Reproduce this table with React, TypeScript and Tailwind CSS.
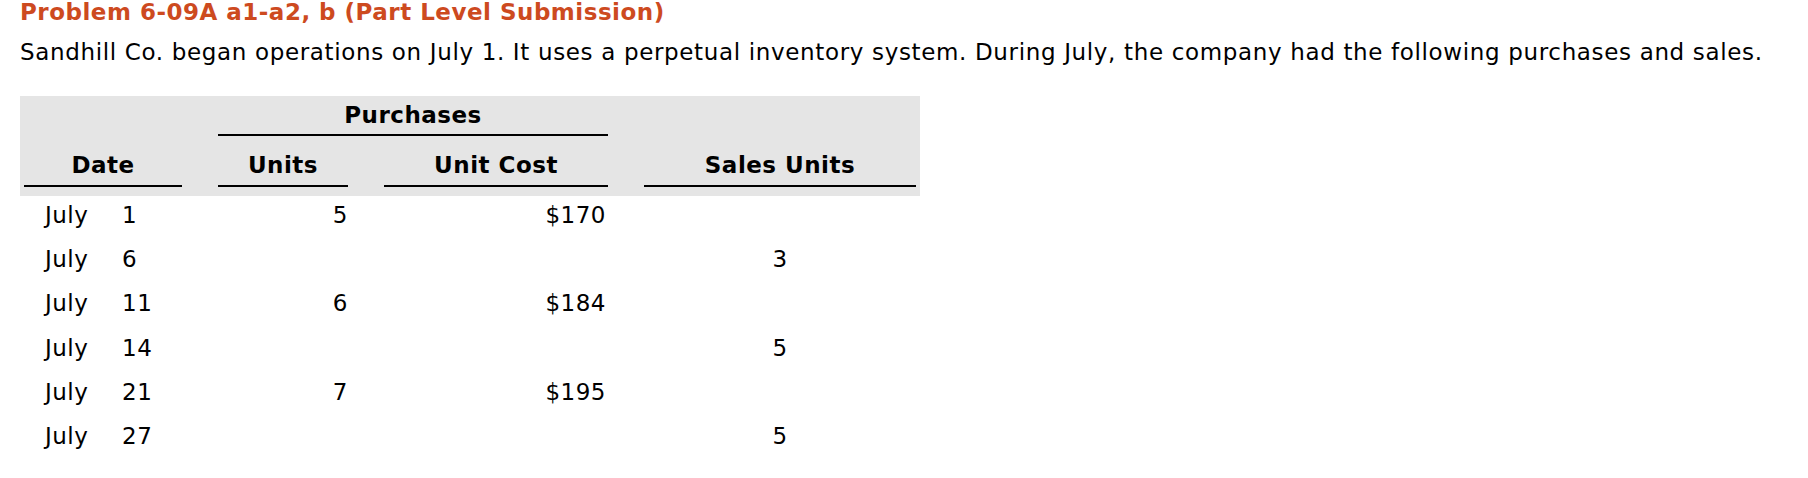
const rows = [
  { day: "1", units: "5", cost: "$170", sales: "" },
  { day: "6", units: "", cost: "", sales: "3" },
  { day: "11", units: "6", cost: "$184", sales: "" },
  { day: "14", units: "", cost: "", sales: "5" },
  { day: "21", units: "7", cost: "$195", sales: "" },
  { day: "27", units: "", cost: "", sales: "5" },
];

const cols = "grid grid-cols-[158px_36px_130px_36px_224px_36px_272px]";

export default function App() {
  return (
    <div className="min-h-screen bg-white pl-5 font-['DejaVu_Sans',Verdana,sans-serif] text-[23px] leading-[26px] tracking-[0.5px] text-black">
      <h1 className="-mt-px font-bold text-[#cd4a1f]">Problem 6-09A a1-a2, b (Part Level Submission)</h1>
      <p className="mt-[14px] tracking-[0.65px]">
        Sandhill Co. began operations on July 1. It uses a perpetual inventory system. During July, the company had the
        following purchases and sales.
      </p>

      <div className="mt-[31px] w-[900px]">
        <div className={`${cols} bg-[#e5e5e5] px-1 pt-[6px] pb-[9px] font-bold`}>
          <div className="col-span-3 col-start-3 border-b-2 border-black pb-[6px] text-center">Purchases</div>
          <div className="col-start-1 row-start-2 mt-4 border-b-2 border-black pb-[7px] text-center">Date</div>
          <div className="col-start-3 row-start-2 mt-4 border-b-2 border-black pb-[7px] text-center">Units</div>
          <div className="col-start-5 row-start-2 mt-4 border-b-2 border-black pb-[7px] text-center">Unit Cost</div>
          <div className="col-start-7 row-start-2 mt-4 border-b-2 border-black pb-[7px] text-center">Sales Units</div>
        </div>

        <div className="-mt-[3px] px-1">
          {rows.map((row) => (
            <div key={row.day} className={`${cols} leading-[44.2px]`}>
              <div className="pl-[21px]">
                <span className="inline-block w-[77px]">July</span>
                {row.day}
              </div>
              <div />
              <div className="text-right">{row.units}</div>
              <div />
              <div className="pr-[2px] text-right">{row.cost}</div>
              <div />
              <div className="text-center">{row.sales}</div>
            </div>
          ))}
        </div>
      </div>
    </div>
  );
}
